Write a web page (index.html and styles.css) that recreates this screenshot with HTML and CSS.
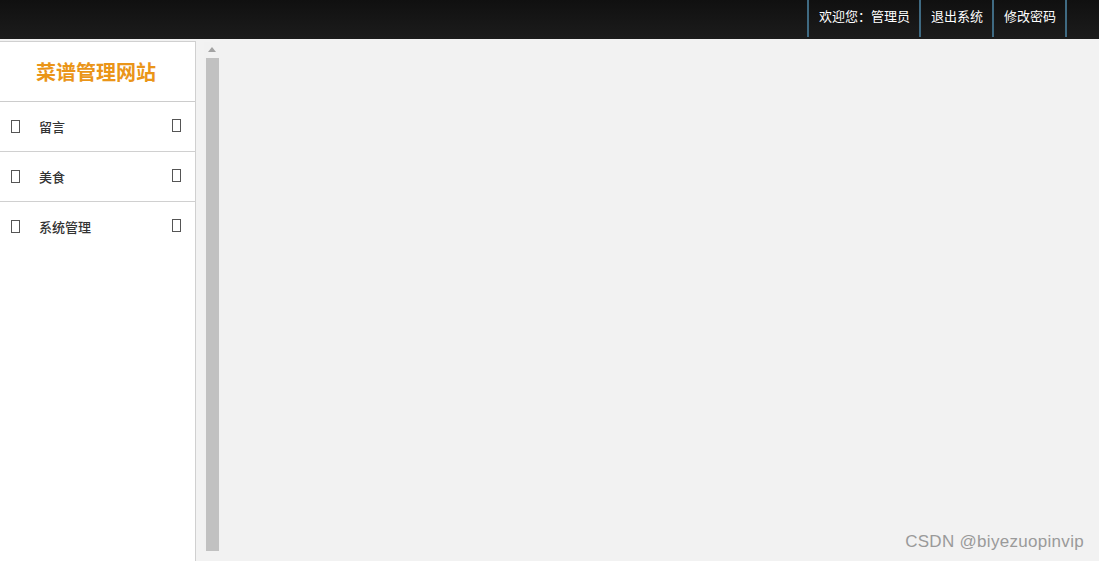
FILE: index.html
```html
<html>
<head>
    <meta charset="utf-8">
    <link rel="stylesheet" href="styles.css">
</head>
<body>
    <div class="header">
        <ul class="top-nav">
            <li>欢迎您：管理员</li>
            <li>退出系统</li>
            <li>修改密码</li>
        </ul>
    </div>
    <div class="wrapper">
        <div class="sidebar">
            <div class="logo">菜谱管理网站</div>
            <ul class="menu">
                <li><span class="box"></span><span class="label">留言</span><span class="box arrow"></span></li>
                <li><span class="box"></span><span class="label">美食</span><span class="box arrow"></span></li>
                <li><span class="box"></span><span class="label">系统管理</span><span class="box arrow"></span></li>
            </ul>
        </div>
        <div class="main">
            <div class="scrollbar">
                <div class="scroll-up"><span class="tri"></span></div>
                <div class="thumb"></div>
            </div>
        </div>
    </div>
    <div class="watermark">CSDN @biyezuopinvip</div>
</body>
</html>
```

FILE: styles.css
```css
body {
    margin: 0;
    font-family: "Noto Sans CJK SC", "Noto Sans", sans-serif;
    font-size: 13px;
    background-color: #f2f2f2;
    height: 561px;
    overflow: hidden;
}

ul {
    list-style: none;
    margin: 0;
    padding: 0;
}

.header {
    height: 39px;
    background: linear-gradient(#101010, #1c1c1c);
    display: flex;
    justify-content: flex-end;
    padding-right: 32px;
}

.top-nav {
    display: flex;
}

.top-nav li {
    color: #fff;
    line-height: 32px;
    height: 37px;
    padding: 0 9px 0 10px;
    border-left: 2px solid #3f6a82;
}

.top-nav li:last-child {
    border-right: 2px solid #3f6a82;
}

.wrapper {
    display: flex;
    height: 520px;
    margin-top: 2px;
}

.sidebar {
    width: 195px;
    background-color: #fff;
    border-top: 1px solid #d0d0d0;
    border-right: 1px solid #d0d0d0;
}

.logo {
    height: 59px;
    line-height: 59px;
    text-align: center;
    color: #ea9518;
    font-size: 20px;
    font-weight: bold;
    border-bottom: 1px solid #cccccc;
    padding-right: 3px;
}

.menu li {
    display: flex;
    align-items: center;
    height: 49px;
    border-bottom: 1px solid #d0d0d0;
    padding: 0 14px 0 11px;
    color: #333;
}

.menu li:last-child {
    border-bottom: none;
}

.box {
    display: block;
    width: 7px;
    height: 11px;
    border: 1px solid #555;
}

.label {
    flex: 1;
    margin-left: 19px;
    font-size: 13px;
    font-weight: 500;
}

.arrow {
    margin-top: -3px;
}

.main {
    flex: 1;
    background-color: #f2f2f2;
    padding: 1px 0 10px 8px;
}

.scrollbar {
    width: 16px;
    height: 509px;
    display: flex;
    flex-direction: column;
    background-color: #f1f1f1;
}

.scroll-up {
    height: 16px;
    display: flex;
    justify-content: center;
    padding-top: 5px;
    box-sizing: border-box;
}

.tri {
    width: 0;
    height: 0;
    border-left: 4px solid transparent;
    border-right: 4px solid transparent;
    border-bottom: 5px solid #a3a3a3;
}

.thumb {
    flex: 1;
    margin: 0 1px 0 2px;
    background-color: #c1c1c1;
}

.watermark {
    position: absolute;
    right: 15px;
    bottom: 9px;
    font-family: "Liberation Sans", Arial, sans-serif;
    font-size: 17px;
    color: #9a9a9a;
    letter-spacing: 0.3px;
}
```
